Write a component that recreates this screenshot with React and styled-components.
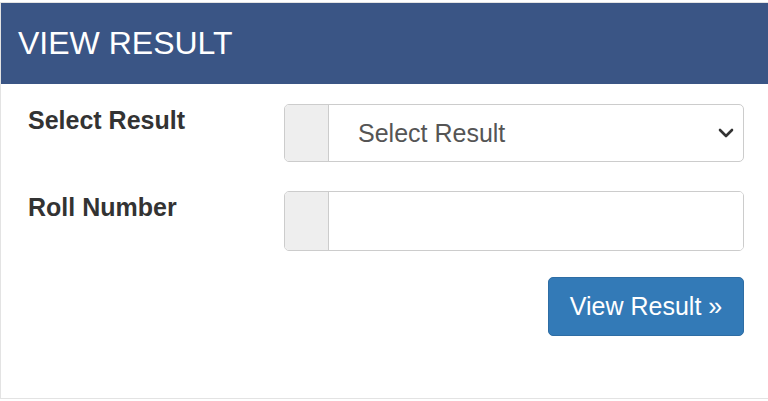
import React, { useState } from "react";
import styled, { createGlobalStyle } from "styled-components";

const GlobalStyle = createGlobalStyle`
  html, body {
    margin: 0;
    padding: 0;
    background: #ffffff;
    font-family: "Liberation Sans", Arial, sans-serif;
    overflow: hidden;
  }
`;

const Panel = styled.div`
  margin-top: 2px;
  border: 1px solid #e3e3e3;
  border-right: 0;
  height: 397px;
  box-sizing: border-box;
  background: #fff;
`;

const PanelHeader = styled.div`
  height: 81px;
  background: #3a5585;
  display: flex;
  align-items: center;
  padding-left: 17px;
  h3 {
    margin: 0;
    color: #ffffff;
    font-size: 32px;
    font-weight: normal;
  }
`;

const Form = styled.form`
  display: grid;
  grid-template-columns: 256px 1fr;
  row-gap: 29px;
  padding: 20px 24px 0 27px;
`;

const Label = styled.label`
  font-size: 25px;
  font-weight: bold;
  color: #333333;
  line-height: 1.2;
  padding-top: 1px;
`;

const InputGroup = styled.div`
  display: flex;
  height: ${(p) => p.$height}px;
  border: 1px solid #cccccc;
  border-radius: 5px;
  overflow: hidden;
  box-sizing: border-box;
`;

const Addon = styled.span`
  width: 43px;
  flex: none;
  background: #eeeeee;
  border-right: 1px solid #cccccc;
`;

const SelectBox = styled.div`
  position: relative;
  flex: 1;
  display: flex;
  align-items: center;
  padding-left: 29px;
  font-size: 25px;
  color: #555555;
  cursor: pointer;
  svg {
    position: absolute;
    right: 9px;
    top: 50%;
    transform: translateY(-50%);
  }
`;

const TextInput = styled.input`
  flex: 1;
  border: 0;
  outline: none;
  padding: 0 16px;
  font-size: 25px;
  font-family: inherit;
  color: #555555;
`;

const ButtonRow = styled.div`
  grid-column: 2;
  display: flex;
  justify-content: flex-end;
  margin-top: -3px;
`;

const Button = styled.button`
  width: 196px;
  height: 59px;
  background: #337ab7;
  border: 1px solid #2e6da4;
  border-radius: 5px;
  color: #ffffff;
  font-size: 25px;
  font-family: inherit;
  cursor: pointer;
`;

function Chevron() {
  return (
    <svg width="16" height="10" viewBox="0 0 16 10">
      <polyline
        points="2,2 8,8 14,2"
        fill="none"
        stroke="#333"
        strokeWidth="2.6"
        strokeLinecap="round"
        strokeLinejoin="round"
      />
    </svg>
  );
}

function App() {
  const [roll, setRoll] = useState("");

  return (
    <>
      <GlobalStyle />
      <Panel>
        <PanelHeader>
          <h3>VIEW RESULT</h3>
        </PanelHeader>
        <Form onSubmit={(e) => e.preventDefault()}>
          <Label>Select Result</Label>
          <InputGroup $height={58}>
            <Addon />
            <SelectBox>
              Select Result
              <Chevron />
            </SelectBox>
          </InputGroup>

          <Label>Roll Number</Label>
          <InputGroup $height={60}>
            <Addon />
            <TextInput value={roll} onChange={(e) => setRoll(e.target.value)} />
          </InputGroup>

          <ButtonRow>
            <Button type="submit">View Result »</Button>
          </ButtonRow>
        </Form>
      </Panel>
    </>
  );
}

export default App;
